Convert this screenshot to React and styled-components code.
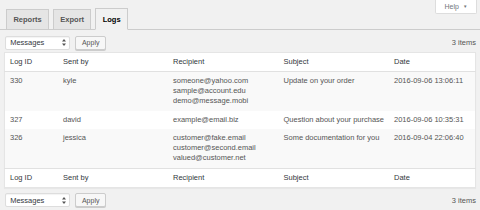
import styled, { createGlobalStyle } from "styled-components";

const GlobalStyle = createGlobalStyle`
  html, body {
    margin: 0;
    padding: 0;
    background: #f1f1f1;
  }
  body {
    font-family: "Liberation Sans", Arial, sans-serif;
    font-size: 7.5px;
    color: #555;
  }
`;

const logs = [
  { id: 330, sender: "kyle", recipients: ["someone@yahoo.com", "sample@account.edu", "demo@message.mobi"], subject: "Update on your order", date: "2016-09-06 13:06:11" },
  { id: 327, sender: "david", recipients: ["example@email.biz"], subject: "Question about your purchase", date: "2016-09-06 10:35:31" },
  { id: 326, sender: "jessica", recipients: ["customer@fake.email", "customer@second.email", "valued@customer.net"], subject: "Some documentation for you", date: "2016-09-04 22:06:40" },
];

const columns = [
  { label: "Log ID", width: "53.5px" },
  { label: "Sent by", width: "110px" },
  { label: "Recipient", width: "110.5px" },
  { label: "Subject", width: "110.5px" },
  { label: "Date", width: "auto" },
];

const Arrows = () => (
  <svg width="4" height="7" viewBox="0 0 4 7">
    <path d="M2 0 L4 2.6 L0 2.6 Z M2 7 L4 4.4 L0 4.4 Z" fill="#555" />
  </svg>
);

const Toolbar = ({ bottom }) => (
  <Bar $bottom={bottom}>
    <SelectBox>
      <span>Messages</span>
      <Arrows />
    </SelectBox>
    <ApplyButton>Apply</ApplyButton>
    <Count>3 items</Count>
  </Bar>
);

const HeadRow = ({ foot }) => (
  <tr>
    {columns.map((c) => (
      <HeadCell key={c.label} $foot={foot}>{c.label}</HeadCell>
    ))}
  </tr>
);

export default function App() {
  return (
    <Page>
      <GlobalStyle />
      <TopBar>
        <Tabs>
          <Tab>Reports</Tab>
          <Tab>Export</Tab>
          <Tab $active>Logs</Tab>
        </Tabs>
        <HelpTab>
          Help <Caret>▼</Caret>
        </HelpTab>
      </TopBar>

      <Toolbar />

      <Table>
        <colgroup>
          {columns.map((c) => (
            <col key={c.label} style={{ width: c.width }} />
          ))}
        </colgroup>
        <thead>
          <HeadRow />
        </thead>
        <tbody>
          {logs.map((log, i) => (
            <Row key={log.id} $alt={i % 2 === 0}>
              <Cell>{log.id}</Cell>
              <Cell>{log.sender}</Cell>
              <Cell>
                {log.recipients.map((r) => (
                  <div key={r}>{r}</div>
                ))}
              </Cell>
              <Cell>{log.subject}</Cell>
              <Cell>{log.date}</Cell>
            </Row>
          ))}
        </tbody>
        <tfoot>
          <HeadRow foot />
        </tfoot>
      </Table>

      <Toolbar bottom />
    </Page>
  );
}

const Page = styled.div`
  width: 480px;
  height: 210px;
  overflow: hidden;
`;

const TopBar = styled.div`
  display: flex;
  align-items: flex-end;
  height: 29px;
  padding: 0 3px 0 6px;
  border-bottom: 1px solid #ccc;
`;

const Tabs = styled.div`
  display: flex;
  align-items: flex-end;
  gap: 3.8px;
`;

const Tab = styled.div`
  box-sizing: border-box;
  height: ${(p) => (p.$active ? "22px" : "20px")};
  margin-bottom: ${(p) => (p.$active ? "-1px" : "0")};
  padding: ${(p) => (p.$active ? "1px" : "0")} 6.4px 0;
  display: flex;
  align-items: center;
  border: 1px solid #ccc;
  border-bottom: ${(p) => (p.$active ? "1px solid #f1f1f1" : "none")};
  background: ${(p) => (p.$active ? "#f1f1f1" : "#e5e5e5")};
  color: ${(p) => (p.$active ? "#000" : "#555")};
  font-weight: 700;
  font-size: 7.5px;
`;

const HelpTab = styled.div`
  align-self: flex-start;
  margin-left: auto;
  box-sizing: border-box;
  width: 42px;
  height: 14px;
  display: flex;
  align-items: center;
  justify-content: center;
  gap: 4px;
  background: #fff;
  border: 1px solid #ddd;
  border-top: none;
  border-radius: 0 0 2px 2px;
  color: #72777c;
  font-size: 7px;
`;

const Caret = styled.span`
  font-size: 4.5px;
  color: #72777c;
`;

const Bar = styled.div`
  display: flex;
  align-items: center;
  gap: 5px;
  height: 14px;
  margin: ${(p) => (p.$bottom ? "5px" : "5.5px")} 4px 0 4.7px;
`;

const SelectBox = styled.div`
  box-sizing: border-box;
  width: 65.5px;
  height: 14px;
  display: flex;
  align-items: center;
  justify-content: space-between;
  padding: 0 3px 0 4.5px;
  background: #fff;
  border: 1px solid #ddd;
  border-radius: 2px;
  box-shadow: inset 0 1px 1px rgba(0, 0, 0, 0.05);
  color: #32373c;
  font-size: 7.5px;
`;

const ApplyButton = styled.button`
  box-sizing: border-box;
  width: 31px;
  height: 14px;
  padding: 0;
  background: #f7f7f7;
  border: 1px solid #ccc;
  border-radius: 2px;
  box-shadow: 0 1px 0 #ccc;
  color: #555;
  font-family: "Liberation Sans", Arial, sans-serif;
  font-size: 7px;
`;

const Count = styled.span`
  margin-left: auto;
  color: #555;
  font-size: 7.5px;
`;

const Table = styled.table`
  box-sizing: border-box;
  width: 472px;
  margin: 2px 4px 0;
  table-layout: fixed;
  border-collapse: collapse;
  background: #fff;
  border: 1px solid #e5e5e5;
  box-shadow: 0 1px 1px rgba(0, 0, 0, 0.04);
`;

const HeadCell = styled.th`
  padding: 4px 5px 4.5px;
  line-height: 10px;
  text-align: left;
  font-weight: 400;
  color: #32373c;
  ${(p) => (p.$foot ? "border-top: 1px solid #e1e1e1;" : "border-bottom: 1px solid #e1e1e1;")}
`;

const Row = styled.tr`
  background: ${(p) => (p.$alt ? "#f9f9f9" : "#fff")};
`;

const Cell = styled.td`
  padding: 4px 5px 4.5px;
  line-height: 10px;
  vertical-align: top;
  color: #555;
  white-space: nowrap;
`;
